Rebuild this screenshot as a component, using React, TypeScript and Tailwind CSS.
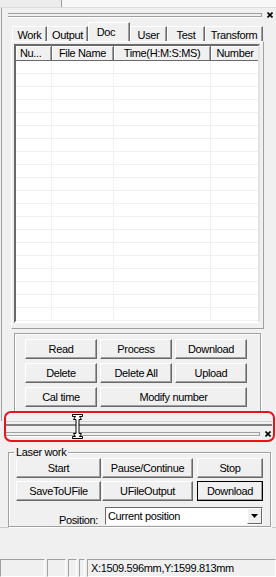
import React from 'react';

const btn =
  'h-[20px] flex items-center justify-center bg-[#f0f0f0] border border-t-white border-l-white border-b-[#696969] border-r-[#696969] shadow-[inset_-1px_-1px_0_#a0a0a0]';

const Grip = ({ top }: { top: string }) => (
  <div className={`flex items-start ${top}`}>
    <div className="ml-[6px] w-[254px] h-[4px] border-t border-b border-r border-[#a0a0a0] shadow-[0_1px_0_#fff]" />
    <svg className="ml-[5px] -mt-[1px]" width="6" height="6" viewBox="0 0 6 6">
      <path d="M0.5 0.5 L5.5 5.5 M5.5 0.5 L0.5 5.5" stroke="#000" strokeWidth="1.6" />
    </svg>
  </div>
);

const Tab = ({ label, w, active }: { label: string; w: string; active?: boolean }) => (
  <div
    className={`${w} flex justify-center border-t border-l border-white border-r border-r-[#696969] shadow-[inset_-1px_0_0_#a0a0a0] ${
      active ? 'h-[19px] pt-[3px] pr-[6px] bg-[#f0f0f0] z-10' : 'h-[15px] pt-[2px]'
    }`}
  >
    {label}
  </div>
);

const columns = [
  { name: 'Nu...', w: 'w-[36px]', align: 'justify-start pl-[4px]' },
  { name: 'File Name', w: 'w-[62px]', align: 'justify-center' },
  { name: 'Time(H:M:S:MS)', w: 'w-[97px]', align: 'justify-center' },
  { name: 'Number', w: 'w-[49px]', align: 'justify-center' },
];

export default function App() {
  const rows = Array.from({ length: 20 }, (_, i) => i);

  return (
    <div className="relative w-[276px] h-[577px] bg-[#f0f0f0] flex flex-col overflow-hidden font-['Tahoma','Liberation_Sans',Arial,sans-serif] text-[11px] tracking-[-0.35px] leading-[13px] text-black">
      {/* strip left over from the panel above */}
      <div className="h-[8px] flex border-b border-[#dcdcdc]">
        <div className="w-[62px] bg-[#ececec] border-r border-[#a0a0a0]" />
        <div className="flex-1 bg-[#f7f7f7]" />
      </div>

      {/* top docked panel */}
      <div className="h-[413px] flex flex-col border-l border-[#a0a0a0] ml-[1px]">
        <Grip top="h-[12px] pt-[5px]" />

        <div className="flex items-end mt-[2px] pl-[10px] h-[19px]">
          <Tab label="Work" w="w-[35px]" />
          <Tab label="Output" w="w-[41px]" />
          <Tab label="Doc" w="w-[42px]" active />
          <Tab label="User" w="w-[37px]" />
          <Tab label="Test" w="w-[38px]" />
          <Tab label="Transform" w="w-[58px]" />
        </div>

        {/* tab page */}
        <div className="ml-[9px] w-[253px] h-[288px] border-t border-l border-white border-r border-b border-r-[#a0a0a0] border-b-[#a0a0a0] pl-[2px] pt-[2px]">
          <div className="w-[246px] h-[279px] bg-white border-2 border-t-[#696969] border-l-[#696969] border-b-white border-r-[#e3e3e3] overflow-hidden">
            <div className="flex h-[15px] bg-[#f0f0f0] border-b border-[#696969]">
              {columns.map((c) => (
                <div
                  key={c.name}
                  className={`${c.w} ${c.align} shrink-0 flex items-center border-r border-[#696969] shadow-[inset_1px_1px_0_#fff,inset_-1px_0_0_#a0a0a0]`}
                >
                  {c.name}
                </div>
              ))}
            </div>
            {rows.map((r) => (
              <div key={r} className="flex h-[13px] border-b border-[#f0f0f0]">
                {columns.map((c) => (
                  <div key={c.name} className={`${c.w} shrink-0 border-r border-[#f0f0f0]`} />
                ))}
              </div>
            ))}
          </div>
        </div>

        {/* doc buttons */}
        <div className="ml-[12px] mt-[4px] w-[247px] h-[80px] border border-[#a0a0a0] shadow-[inset_1px_1px_0_#fff,1px_1px_0_#fff] px-[10px] pt-[5px] flex flex-col gap-[4px]">
          <div className="flex gap-[3px]">
            <div className={`${btn} w-[72px]`}>Read</div>
            <div className={`${btn} w-[72px]`}>Process</div>
            <div className={`${btn} w-[72px]`}>Download</div>
          </div>
          <div className="flex gap-[3px]">
            <div className={`${btn} w-[72px]`}>Delete</div>
            <div className={`${btn} w-[72px]`}>Delete All</div>
            <div className={`${btn} w-[72px]`}>Upload</div>
          </div>
          <div className="flex gap-[3px]">
            <div className={`${btn} w-[72px]`}>Cal time</div>
            <div className={`${btn} w-[147px]`}>Modify number</div>
          </div>
        </div>
      </div>

      {/* splitter */}
      <div className="h-[5px] ml-[6px] mr-[4px] border-t border-[#d4d4d4] border-b-2 border-b-[#808080]" />

      {/* lower docked panel */}
      <div className="flex flex-col h-[102px] border-b border-[#c8c8c8]">
        <Grip top="h-[14px] pt-[6px]" />

        <div className="relative ml-[8px] mt-[12px] w-[263px] h-[75px] border border-[#a0a0a0] shadow-[inset_1px_1px_0_#fff,1px_1px_0_#fff] px-[7px] pt-[5px]">
          <span className="absolute -top-[7px] left-[5px] px-[2px] bg-[#f0f0f0]">Laser work</span>
          <div className="flex flex-col gap-[3px]">
            <div className="flex">
              <div className={`${btn} w-[85px]`}>Start</div>
              <div className={`${btn} w-[91px] ml-[1px]`}>Pause/Continue</div>
              <div className={`${btn} w-[66px] ml-[4px]`}>Stop</div>
            </div>
            <div className="flex">
              <div className={`${btn} w-[85px]`}>SaveToUFile</div>
              <div className={`${btn} w-[91px] ml-[1px]`}>UFileOutput</div>
              <div className={`${btn} w-[66px] ml-[4px] outline outline-1 outline-black -outline-offset-1`}>Download</div>
            </div>
          </div>
          <div className="flex items-end mt-[6px]">
            <span className="w-[85px] text-right pr-[3px] translate-y-[2px]">Position:</span>
            <div className="ml-[4px] w-[158px] h-[18px] bg-white border border-t-[#696969] border-l-[#696969] border-b-white border-r-white flex items-center">
              <span className="flex-1 pl-[2px]">Current position</span>
              <div className="w-[15px] h-[16px] bg-[#f0f0f0] border border-t-white border-l-white border-b-[#696969] border-r-[#696969] flex items-center justify-center">
                <svg width="7" height="4" viewBox="0 0 7 4"><path d="M0 0 H7 L3.5 4 Z" fill="#000" /></svg>
              </div>
            </div>
          </div>
        </div>
      </div>

      <div className="flex-1" />

      {/* status bar */}
      <div className="h-[19px] flex gap-[2px] pt-[1px]">
        <div className="w-[45px] border border-t-[#a0a0a0] border-l-[#a0a0a0] border-b-white border-r-white" />
        <div className="w-[19px] border border-t-[#a0a0a0] border-l-[#a0a0a0] border-b-white border-r-white" />
        <div className="w-[9px] border border-t-[#a0a0a0] border-l-[#a0a0a0] border-b-white border-r-white" />
        <div className="w-[6px] border border-t-[#a0a0a0] border-l-[#a0a0a0] border-b-white border-r-white" />
        <div className="flex-1 border border-t-[#a0a0a0] border-l-[#a0a0a0] border-b-white border-r-white pl-[3px] flex items-center">
          X:1509.596mm,Y:1599.813mm
        </div>
      </div>

      {/* red annotation around the splitter */}
      <div className="absolute left-[4px] top-[411px] w-[271px] h-[31px] border-2 border-[#e8121a] rounded-[7px] pointer-events-none" />

      {/* resize cursor */}
      <svg className="absolute left-[72px] top-[414px]" width="11" height="25" viewBox="0 0 11 25">
        <path
          d="M0.5 0.5 H10.5 V2.5 H7.5 L9.5 5.5 H7 V19.5 H9.5 L7.5 22.5 H10.5 V24.5 H0.5 V22.5 H3.5 L1.5 19.5 H4 V5.5 H1.5 L3.5 2.5 H0.5 Z"
          fill="#fff"
          stroke="#000"
          strokeWidth="1"
        />
      </svg>
    </div>
  );
}
